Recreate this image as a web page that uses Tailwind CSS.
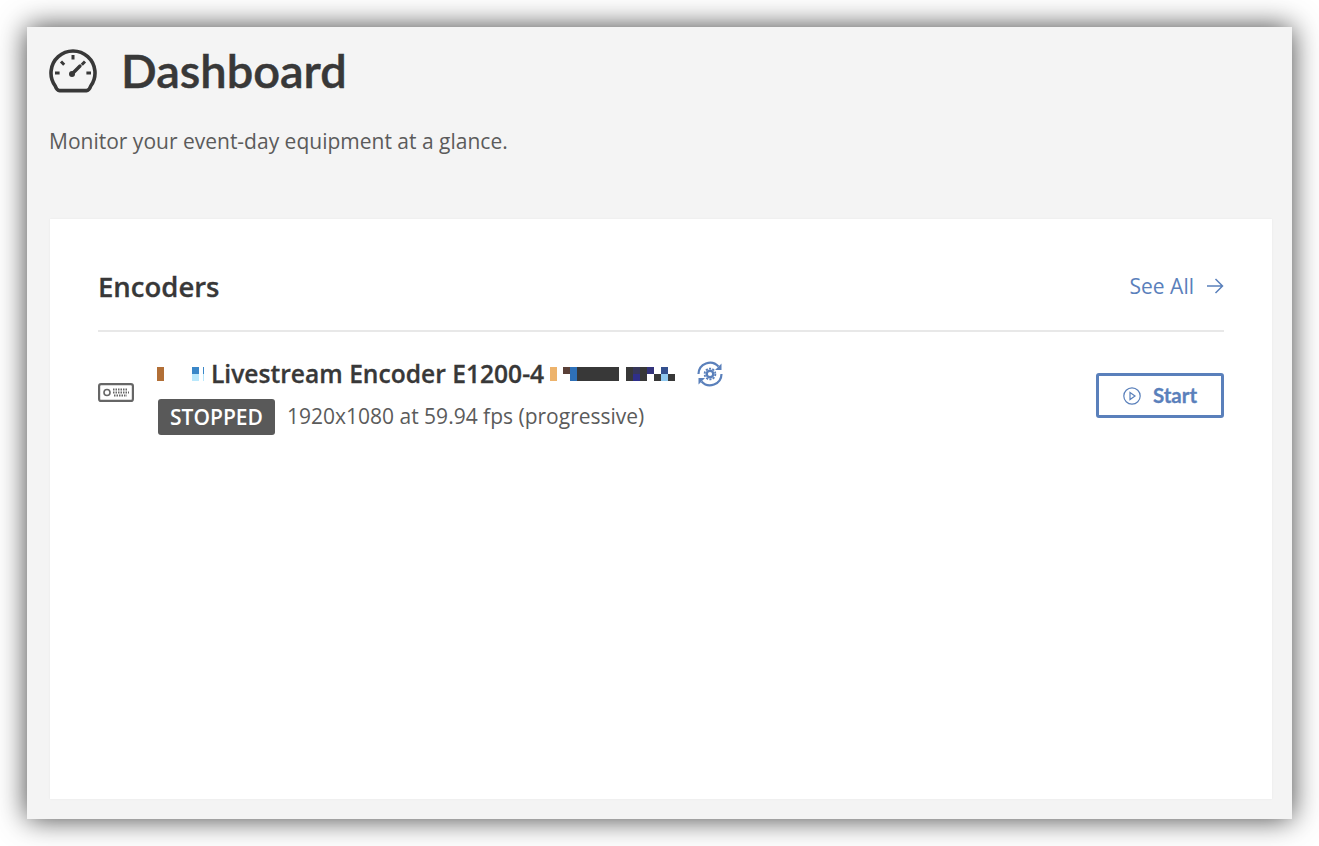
<!DOCTYPE html>
<html lang="en">
<head>
  <meta charset="UTF-8" />
  <title>Dashboard</title>
  <script src="https://cdn.jsdelivr.net/npm/@tailwindcss/browser@4"></script>
</head>
<body class="bg-white font-['Open_Sans',sans-serif] w-[1319px] h-[846px] overflow-hidden pt-[27px] pl-[27px]">
  <div class="w-[1265px] h-[792px] bg-[#f4f4f4] shadow-[0_0_27px_rgba(0,0,0,0.75)] pl-[23px] pr-[20px] flex flex-col">
    <div class="flex items-center h-[88px] -ml-[1px]">
      <svg class="w-[48px] h-[44px]" viewBox="0 0 48 44" fill="none" stroke="#383838" stroke-width="3.6">
        <path d="M10.5 41.6 Q7.8 41.6 6.25 37 A22 22 0 1 1 41.75 37 Q40.2 41.6 37.5 41.6 Z" stroke-linejoin="round"/>
        <path d="M24 6v4.5M12 12.5l3.2 3.2M36 12.5l-3.2 3.2M6 24h4.6M37.4 24h4.6" stroke-width="3"/>
        <path d="M23.5 24.5l7.5-7.5" stroke-width="3.4" stroke-linecap="round"/>
        <circle cx="23" cy="25" r="3" fill="#383838" stroke="none"/>
      </svg>
      <h1 class="ml-[24px] -mt-[1px] font-['Lato',sans-serif] font-semibold text-[47px] leading-none text-[#383838] [-webkit-text-stroke:0.5px_#383838]">Dashboard</h1>
    </div>
    <p class="mt-[12px] -ml-[1px] text-[21px] leading-[28px] text-[#5b5b5b]">Monitor your event-day equipment at a glance.</p>
    <div class="mt-[64px] w-[1222px] h-[580px] bg-white shadow-[0_0_2px_rgba(0,0,0,0.06)] px-[48px]">
      <div class="flex items-center justify-between h-[113px] border-b-2 border-[#e8e8e8] pt-[25px]">
        <h2 class="font-semibold text-[27.5px] text-[#383838] [-webkit-text-stroke:0.3px_#383838]">Encoders</h2>
        <a class="flex items-center text-[21px] text-[#5a80bb]">See All
          <svg class="ml-[12px] -mt-[3px] w-[18px] h-[18px]" viewBox="0 0 18 18" fill="none" stroke="#5a80bb" stroke-width="1.5"><path d="M1 9h15M9.5 2l7 7-7 7"/></svg>
        </a>
      </div>
      <div class="flex justify-between pt-[26px]">
        <div class="flex">
          <svg class="w-[36px] h-[19px] mt-[25px]" viewBox="0 0 36 19" fill="none" stroke="#666" stroke-width="2.2">
            <rect x="1.1" y="1.1" width="33.8" height="16.8" rx="2"/>
            <circle cx="9" cy="9.5" r="3" stroke-width="1.6"/>
            <path d="M15 6.5h15M15 9.5h16M16 12.5h13" stroke-width="1.8" stroke-dasharray="1.5 1"/>
          </svg>
          <div class="ml-[23px]">
            <div class="flex items-center h-[32px]">
              <span class="w-[7px] h-[14px] bg-[#b26f36]"></span>
              <span class="ml-[28px] w-[7px] h-[14px] bg-gradient-to-b from-[#3a87c8] from-50% to-[#b9e8fc] to-50%"></span>
              <span class="ml-[4px] w-[1px] h-[14px] bg-gradient-to-b from-[#3a87c8] from-50% to-[#b9e8fc] to-50%"></span>
              <span class="ml-[7px] w-[333px] shrink-0 text-[24.6px] font-semibold text-[#383838] whitespace-nowrap leading-none [-webkit-text-stroke:0.3px_#383838]">Livestream Encoder E1200-4</span>
              <span class="ml-[6px] w-[7px] h-[14px] bg-[#edb36c]"></span>
              <span class="ml-[6px] flex flex-col h-[14px] w-[56px]">
                <span class="flex h-[7px]">
                  <span class="w-[7px] bg-[#5a4038]"></span>
                  <span class="w-[7px] bg-[#2e70b8]"></span>
                  <span class="w-[42px] bg-[#383838]"></span>
                </span>
                <span class="flex h-[7px]">
                  <span class="w-[7px] bg-white"></span>
                  <span class="w-[7px] bg-[#2e70b8]"></span>
                  <span class="w-[42px] bg-[#383838]"></span>
                </span>
              </span>
              <span class="ml-[7px] flex flex-col h-[14px] w-[49px]">
                <span class="flex h-[7px]">
                  <span class="w-[7px] bg-[#383838]"></span>
                  <span class="w-[7px] bg-[#36365a]"></span>
                  <span class="w-[7px] bg-[#383838]"></span>
                  <span class="w-[7px] bg-[#33337a]"></span>
                  <span class="w-[7px] bg-white"></span>
                  <span class="w-[7px] bg-[#33508f]"></span>
                  <span class="w-[7px] bg-white"></span>
                </span>
                <span class="flex h-[7px]">
                  <span class="w-[7px] bg-[#383838]"></span>
                  <span class="w-[7px] bg-[#2f2f8a]"></span>
                  <span class="w-[7px] bg-[#383838]"></span>
                  <span class="w-[7px] bg-white"></span>
                  <span class="w-[7px] bg-[#383838]"></span>
                  <span class="w-[7px] bg-[#8fc8f0]"></span>
                  <span class="w-[7px] bg-[#383838]"></span>
                </span>
              </span>
              <svg class="ml-[22px] w-[26px] h-[26px]" viewBox="0 0 26 26" fill="none" stroke="#5a80bb" stroke-width="2.2">
                <path d="M1.5 13A11.5 11.5 0 0 1 21.5 5.5M24.5 13A11.5 11.5 0 0 1 4.5 20.5"/>
                <path d="M24.5 2.5V9H18zM1.5 23.5V17H8z" fill="#5a80bb" stroke="none"/>
                <circle cx="13" cy="13" r="5.4" stroke-width="1.8" stroke-dasharray="2.1 1.3"/>
                <circle cx="13" cy="13" r="3.3" stroke-width="2.4"/>
              </svg>
            </div>
            <div class="flex items-center mt-[9px] ml-[1px]">
              <span class="flex items-center justify-center w-[117px] h-[36px] pt-[2px] bg-[#595959] rounded-[3px] text-white text-[21px] font-semibold">STOPPED</span>
              <span class="ml-[12px] text-[21px] text-[#5b5b5b]">1920x1080 at 59.94 fps (progressive)</span>
            </div>
          </div>
        </div>
        <button class="mt-[15px] flex items-center justify-center w-[128px] h-[45px] border-[3px] border-[#5a80bb] rounded-[3px] text-[#5a80bb] font-['Lato',sans-serif] font-bold text-[20.5px] [-webkit-text-stroke:0.3px_#5a80bb]">
          <svg class="w-[18px] h-[18px] mr-[12px]" viewBox="0 0 18 18" fill="none" stroke="#5a80bb" stroke-width="1.2"><circle cx="9" cy="9" r="8.2"/><path d="M7 5.5l5 3.5-5 3.5z"/></svg>
          Start
        </button>
      </div>
    </div>
  </div>
</body>
</html>
